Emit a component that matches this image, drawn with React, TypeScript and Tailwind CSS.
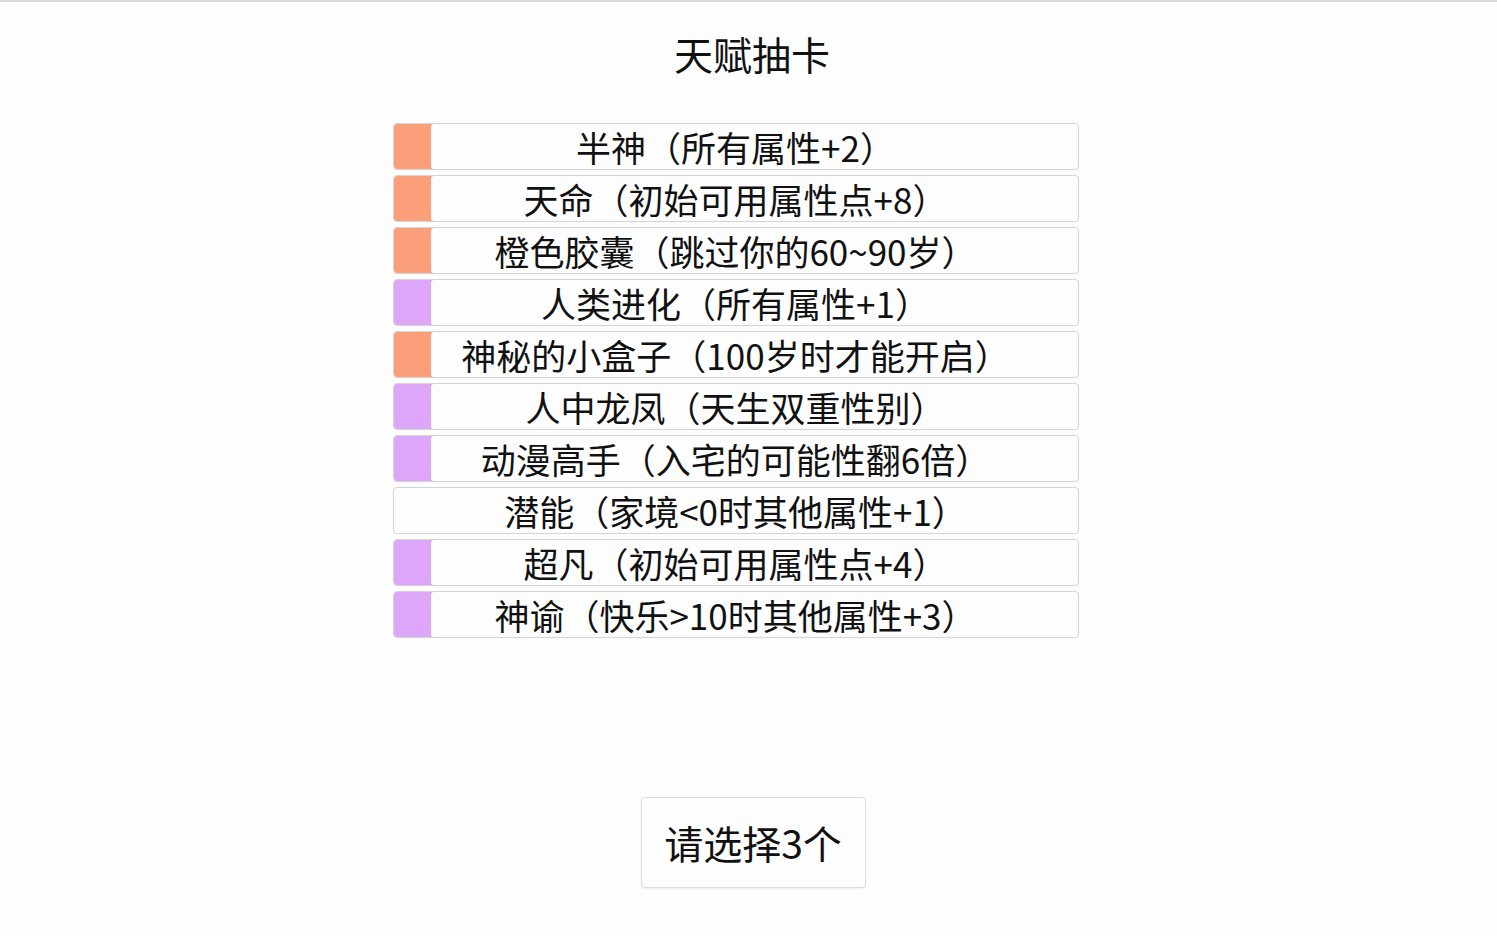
import React from "react";

type Talent = { name: string; grade: "orange" | "purple" | "none" };

const talents: Talent[] = [
  { name: "半神（所有属性+2）", grade: "orange" },
  { name: "天命（初始可用属性点+8）", grade: "orange" },
  { name: "橙色胶囊（跳过你的60~90岁）", grade: "orange" },
  { name: "人类进化（所有属性+1）", grade: "purple" },
  { name: "神秘的小盒子（100岁时才能开启）", grade: "orange" },
  { name: "人中龙凤（天生双重性别）", grade: "purple" },
  { name: "动漫高手（入宅的可能性翻6倍）", grade: "purple" },
  { name: "潜能（家境<0时其他属性+1）", grade: "none" },
  { name: "超凡（初始可用属性点+4）", grade: "purple" },
  { name: "神谕（快乐>10时其他属性+3）", grade: "purple" },
];

const font = { fontFamily: '"Microsoft YaHei", "Noto Sans CJK SC", "Noto Sans", sans-serif' };

function TalentRow({ talent }: { talent: Talent }) {
  const bar =
    talent.grade === "orange"
      ? "shadow-[inset_37px_0_0_#fa9f7a]"
      : talent.grade === "purple"
        ? "shadow-[inset_37px_0_0_#dea6f9]"
        : "";
  return (
    <button
      className={`h-[47px] w-full rounded-[4px] border border-[#d4d4d4] bg-[#fdfdfd] text-center text-[35px] leading-[45px] text-[#111] ${bar}`}
    >
      {talent.name}
    </button>
  );
}

export default function App() {
  return (
    <div style={font} className="min-h-[936px] w-full border-t-2 border-[#d9d9d9] bg-[#fdfdfd]">
      <div className="flex flex-col items-center">
        <h1 className="mt-[29px] pl-[7px] text-[39px] leading-[44px] text-[#111]">天赋抽卡</h1>
        <div className="mt-[48px] mr-[26px] flex w-[686px] flex-col gap-[5px]">
          {talents.map((t) => (
            <TalentRow key={t.name} talent={t} />
          ))}
        </div>
        <button className="mt-[159px] ml-[9px] h-[91px] w-[225px] rounded-[4px] border border-[#dcdcdc] bg-[#fdfdfd] text-[39px] text-[#111] shadow-[0_1px_2px_rgba(0,0,0,0.06)]">
          请选择3个
        </button>
      </div>
    </div>
  );
}
